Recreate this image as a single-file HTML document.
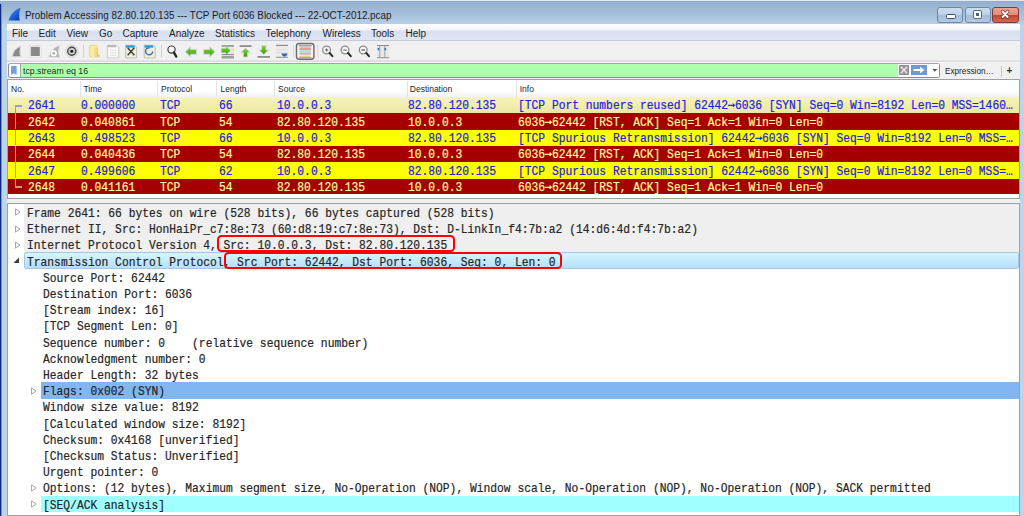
<!DOCTYPE html>
<html><head><meta charset="utf-8">
<style>
html,body{margin:0;padding:0}
body{width:1024px;height:516px;overflow:hidden;position:relative;background:#bcd4ec;font-family:"Liberation Sans",sans-serif}
.a{position:absolute}
.m{font-family:"Liberation Mono",monospace;font-size:11.85px;white-space:pre;transform:scaleX(0.9535);transform-origin:0 0;-webkit-text-stroke:0.2px currentColor;transform-origin:0 0}
.s{font-family:"Liberation Sans",sans-serif;white-space:pre}
#title{left:0;top:0;width:1024px;height:24px;background:linear-gradient(#e2eaf2 0,#e2eaf2 1px,#8ca9c9 1px,#95b1d0 2px,#a3bcd8 12px,#b5cde6 23px)}
#client{left:7px;top:23.6px;width:1013px;height:493px;background:#f0f0f0}
#menubar{left:0;top:0;width:1013px;height:17px;background:linear-gradient(#ffffff 0,#f3f5fb 6px,#d9dff0 7px,#e1e6f4 16px,#c6cad8 16px,#c6cad8 17px)}
.menu{top:4px;font-size:10px;color:#1e1e1e}
.tb{top:20px}

.hd{top:60.6px;font-size:8.5px;color:#1e1e1e}
.row{left:1px;width:1011px;height:16.3px}
.row .m{top:2.4px}
.red{background:#a40000;color:#fffc9c}
.yel{background:#ffff00;color:#2222dd}
.sel{background:linear-gradient(#f6f4b8,#ebe6a2);color:#2222dd}
.dbg{width:auto;right:1px;height:16.21px}
.par{background:#efefef}
.tsel{background:linear-gradient(#d6f6fe,#b4e0fa);border:1px solid #a8c6e4;border-radius:2px;box-sizing:border-box;margin-top:-0.6px;height:17.2px!important}
.flags{background:#82b6f0}
.seqack{background:#a0ffff}
.dt{color:#262626}
.ar{position:relative;top:-2px;-webkit-text-stroke:0.5px currentColor}
</style></head><body>
<div id="title" class="a"></div>
<div class="a" style="left:0;top:4px;width:1px;height:512px;background:#0e2c80"></div>
<div class="a" style="left:1px;top:4px;width:1px;height:512px;background:#7c96b8"></div>
<!-- title icon -->
<svg class="a" style="left:8px;top:7.4px" width="14" height="14" viewBox="0 0 14 14">
<defs><linearGradient id="fin" x1="0" y1="0" x2="1" y2="1"><stop offset="0" stop-color="#4aa0f8"/><stop offset="0.6" stop-color="#1a5ad8"/><stop offset="1" stop-color="#0a32a0"/></linearGradient></defs>
<path d="M0.6 13.4 C2.2 7.5 6 3 12.6 0.8 C11 4.8 10.6 9.2 11.8 13.4 Z" fill="url(#fin)"/>
</svg>
<div class="a s" style="left:25px;top:9.5px;font-size:10px;color:#1a1a2a;transform:scaleX(0.985);transform-origin:0 0">Problem Accessing 82.80.120.135 --- TCP Port 6036 Blocked --- 22-OCT-2012.pcap</div>
<!-- caption buttons -->
<div class="a" style="left:937px;top:6.5px;width:24px;height:14px;border:1px solid #6f87a6;border-radius:3px;background:linear-gradient(#cadcf0 0,#bcd1ea 50%,#a3bcd9 50%,#b2c9e3 100%)"></div>
<div class="a" style="left:946px;top:14px;width:8px;height:3px;border:1px solid #3a4a60;border-radius:1.5px;background:#fff"></div>
<div class="a" style="left:964.5px;top:6.5px;width:24px;height:14px;border:1px solid #6f87a6;border-radius:3px;background:linear-gradient(#cadcf0 0,#bcd1ea 50%,#a3bcd9 50%,#b2c9e3 100%)"></div>
<div class="a" style="left:973.8px;top:11px;width:3.6px;height:2.8px;border:2px solid #fff;border-radius:1px;box-shadow:0 0 0 1px #5a6a80;background:#4a6080"></div>
<div class="a" style="left:992px;top:6.5px;width:25px;height:14px;border:1px solid #7a3a40;border-radius:3px;background:linear-gradient(#eca294 0,#e08a78 50%,#c4432c 50%,#d46a50 100%)"></div>
<svg class="a" style="left:998px;top:8px" width="14" height="12" viewBox="0 0 14 12"><path d="M4.6 3.6 L9.6 9 M9.6 3.6 L4.6 9" stroke="#6a3030" stroke-width="3.4" stroke-linecap="round"/><path d="M4.6 3.6 L9.6 9 M9.6 3.6 L4.6 9" stroke="#fff" stroke-width="2" stroke-linecap="round"/></svg>

<div id="client" class="a">
 <div id="menubar" class="a"></div>
 <div class="a s menu" style="left:5px">File</div>
 <div class="a s menu" style="left:31.5px">Edit</div>
 <div class="a s menu" style="left:59.5px">View</div>
 <div class="a s menu" style="left:92px">Go</div>
 <div class="a s menu" style="left:115.5px">Capture</div>
 <div class="a s menu" style="left:162px">Analyze</div>
 <div class="a s menu" style="left:208px">Statistics</div>
 <div class="a s menu" style="left:258.5px">Telephony</div>
 <div class="a s menu" style="left:315.5px">Wireless</div>
 <div class="a s menu" style="left:364px">Tools</div>
 <div class="a s menu" style="left:398.5px">Help</div>

 <!-- toolbar (client coords: x-7, y-23.6) -->
 <div class="a" style="left:0;top:36.6px;width:1013px;height:1.6px;background:linear-gradient(#e6e6e6,#d8d8d8)"></div>
 <div class="a" style="left:0;top:38.2px;width:1013px;height:1.2px;background:#f8f6f8"></div>
 <!-- filter box -->
 <div class="a" style="left:1px;top:39.7px;width:930px;height:12.4px;border:1.2px solid #8c8c8c;border-top-color:#a8a0a8;border-radius:3px;background:#afffaf"></div>
 <div class="a" style="left:2.2px;top:40.9px;width:10.8px;height:12.4px;background:#fff;border-right:0.8px solid #a0a8a0;border-radius:2px 0 0 2px"></div>
 <svg class="a" style="left:4.4px;top:42.2px" width="6" height="10" viewBox="0 0 6 10"><path d="M0 0 H5.6 V9.1 L2.8 7.3 L0 9.1 Z" fill="#72a0d8"/></svg>
 <div class="a s" style="left:15.8px;top:42.3px;font-size:9px;color:#1e2a1e;transform:scaleX(0.97);transform-origin:0 0">tcp.stream eq 16</div>
 <div class="a" style="left:891px;top:40.6px;width:41px;height:12.6px;background:#fff"></div>
 <svg class="a" style="left:891.8px;top:41.9px" width="10" height="10" viewBox="0 0 10 10"><rect x="0" y="0" width="10" height="10" rx="1" fill="#8c8c8c"/><rect x="1" y="1" width="8" height="8" fill="#9c9c9c"/><path d="M1.8 1.8 L8.2 8.2 M8.2 1.8 L1.8 8.2" stroke="#e8e8e8" stroke-width="1.3"/></svg>
 <svg class="a" style="left:903.7px;top:41.9px" width="16" height="10" viewBox="0 0 16 10"><rect x="0" y="0" width="16" height="10" fill="#6c9ad4"/><path d="M2.5 4 H9 V1.8 L13.5 5 L9 8.2 V6 H2.5 Z" fill="#fff"/></svg>
 <svg class="a" style="left:924.8px;top:45.4px" width="6" height="4" viewBox="0 0 6 4"><path d="M0.4 0 H5.2 L2.8 2.8 Z" fill="#505050"/></svg>
 <div class="a s" style="left:937.5px;top:42.8px;font-size:9px;color:#1e1e1e;transform:scaleX(0.91);transform-origin:0 0">Expression…</div>
 <div class="a" style="left:994px;top:42px;width:1px;height:11px;background:#c8c8c8"></div>
 <div class="a s" style="left:999.6px;top:41.6px;font-size:10px;font-weight:bold;color:#303030">+</div>

 <!-- packet list -->
 <div class="a" style="left:0;top:55.4px;width:1013px;height:1px;background:#a0a0a0"></div>
 <div class="a" style="left:0;top:55.4px;width:1px;height:120px;background:#a0a0a0"></div>
 <div class="a" style="left:1012px;top:55.4px;width:1px;height:120px;background:#a0a0a0"></div>
 <div class="a" style="left:1px;top:56.4px;width:1011px;height:17.1px;background:linear-gradient(#ffffff,#ffffff 60%,#f2f2f2)"></div>
 <div class="a" style="left:72.5px;top:57px;width:1px;height:16px;background:#e2e2e2"></div>
 <div class="a" style="left:150.2px;top:57px;width:1px;height:16px;background:#e2e2e2"></div>
 <div class="a" style="left:209.2px;top:57px;width:1px;height:16px;background:#e2e2e2"></div>
 <div class="a" style="left:266.6px;top:57px;width:1px;height:16px;background:#e2e2e2"></div>
 <div class="a" style="left:399.6px;top:57px;width:1px;height:16px;background:#e2e2e2"></div>
 <div class="a" style="left:509px;top:57px;width:1px;height:16px;background:#e2e2e2"></div>
 <div class="a s hd" style="left:4px">No.</div>
 <div class="a s hd" style="left:76.4px">Time</div>
 <div class="a s hd" style="left:154px">Protocol</div>
 <div class="a s hd" style="left:213.5px">Length</div>
 <div class="a s hd" style="left:271px">Source</div>
 <div class="a s hd" style="left:402.8px">Destination</div>
 <div class="a s hd" style="left:512.7px">Info</div>
 <div class="a row sel" style="top:73.50px"><span class="a m" style="left:20px">2641</span><span class="a m" style="left:72.5px">0.000000</span><span class="a m" style="left:151.5px">TCP</span><span class="a m" style="left:210.5px">66</span><span class="a m" style="left:268.5px">10.0.0.3</span><span class="a m" style="left:400px">82.80.120.135</span><span class="a m" style="left:509.5px">[TCP Port numbers reused] 62442<span class="ar">→</span>6036 [SYN] Seq=0 Win=8192 Len=0 MSS=1460…</span></div>
 <div class="a row red" style="top:89.80px"><span class="a m" style="left:20px">2642</span><span class="a m" style="left:72.5px">0.040861</span><span class="a m" style="left:151.5px">TCP</span><span class="a m" style="left:210.5px">54</span><span class="a m" style="left:268.5px">82.80.120.135</span><span class="a m" style="left:400px">10.0.0.3</span><span class="a m" style="left:509.5px">6036<span class="ar">→</span>62442 [RST, ACK] Seq=1 Ack=1 Win=0 Len=0</span></div>
 <div class="a row yel" style="top:106.10px"><span class="a m" style="left:20px">2643</span><span class="a m" style="left:72.5px">0.498523</span><span class="a m" style="left:151.5px">TCP</span><span class="a m" style="left:210.5px">66</span><span class="a m" style="left:268.5px">10.0.0.3</span><span class="a m" style="left:400px">82.80.120.135</span><span class="a m" style="left:509.5px">[TCP Spurious Retransmission] 62442<span class="ar">→</span>6036 [SYN] Seq=0 Win=8192 Len=0 MSS=…</span></div>
 <div class="a row red" style="top:122.40px"><span class="a m" style="left:20px">2644</span><span class="a m" style="left:72.5px">0.040436</span><span class="a m" style="left:151.5px">TCP</span><span class="a m" style="left:210.5px">54</span><span class="a m" style="left:268.5px">82.80.120.135</span><span class="a m" style="left:400px">10.0.0.3</span><span class="a m" style="left:509.5px">6036<span class="ar">→</span>62442 [RST, ACK] Seq=1 Ack=1 Win=0 Len=0</span></div>
 <div class="a row yel" style="top:138.70px"><span class="a m" style="left:20px">2647</span><span class="a m" style="left:72.5px">0.499606</span><span class="a m" style="left:151.5px">TCP</span><span class="a m" style="left:210.5px">62</span><span class="a m" style="left:268.5px">10.0.0.3</span><span class="a m" style="left:400px">82.80.120.135</span><span class="a m" style="left:509.5px">[TCP Spurious Retransmission] 62442<span class="ar">→</span>6036 [SYN] Seq=0 Win=8192 Len=0 MSS=…</span></div>
 <div class="a row red" style="top:155.00px"><span class="a m" style="left:20px">2648</span><span class="a m" style="left:72.5px">0.041161</span><span class="a m" style="left:151.5px">TCP</span><span class="a m" style="left:210.5px">54</span><span class="a m" style="left:268.5px">82.80.120.135</span><span class="a m" style="left:400px">10.0.0.3</span><span class="a m" style="left:509.5px">6036<span class="ar">→</span>62442 [RST, ACK] Seq=1 Ack=1 Win=0 Len=0</span></div>

 <div class="a" style="left:7.5px;top:81.60px;width:1.6px;height:7.60px;background:rgba(34,34,221,0.4)"></div>
 <div class="a" style="left:9.1px;top:81.60px;width:5.90px;height:1.5px;background:rgba(34,34,221,0.4)"></div>
 <div class="a" style="left:7.5px;top:89.20px;width:1.6px;height:16.3px;background:rgba(255,252,156,0.6)"></div>
 <div class="a" style="left:7.5px;top:105.50px;width:1.6px;height:16.3px;background:rgba(34,34,221,0.4)"></div>
 <div class="a" style="left:7.5px;top:121.80px;width:1.6px;height:16.3px;background:rgba(255,252,156,0.6)"></div>
 <div class="a" style="left:7.5px;top:138.10px;width:1.6px;height:16.3px;background:rgba(34,34,221,0.4)"></div>
 <div class="a" style="left:7.5px;top:154.40px;width:1.6px;height:9.60px;background:rgba(255,252,156,0.6)"></div>
 <div class="a" style="left:9.1px;top:162.40px;width:6.20px;height:1.6px;background:rgba(255,252,156,0.6)"></div>
 <div class="a" style="left:1px;top:170.8px;width:1011px;height:3.8px;background:#fff"></div>
 <div class="a" style="left:0;top:174.6px;width:1013px;height:1px;background:#a0a0a0"></div>
 <div class="a" style="left:0;top:179.4px;width:1013px;height:1px;background:#a0a0a0"></div>
 <div class="a" style="left:0;top:180.4px;width:1px;height:313px;background:#a0a0a0"></div>
 <div class="a" style="left:1012px;top:180.4px;width:1px;height:313px;background:#a0a0a0"></div>
 <div class="a" style="left:1px;top:180.4px;width:1011px;height:310.6px;background:#fff"></div>
 <div class="a" style="left:0;top:491px;width:1013px;height:1px;background:#a0a0a0"></div>
 <div class="a dbg par" style="top:180.40px;left:17.3px"></div>
 <svg class="a" style="left:7.8px;top:184.90px" width="6" height="8" viewBox="0 0 6 8"><path d="M0.5 0.8 L5 4 L0.5 7.2 Z" fill="#fff" stroke="#a8a8a8" stroke-width="1"/></svg>
 <div class="a m dt" style="left:20.2px;top:183.30px">Frame 2641: 66 bytes on wire (528 bits), 66 bytes captured (528 bits)</div>
 <div class="a dbg par" style="top:196.61px;left:17.3px"></div>
 <svg class="a" style="left:7.8px;top:201.11px" width="6" height="8" viewBox="0 0 6 8"><path d="M0.5 0.8 L5 4 L0.5 7.2 Z" fill="#fff" stroke="#a8a8a8" stroke-width="1"/></svg>
 <div class="a m dt" style="left:20.2px;top:199.51px">Ethernet II, Src: HonHaiPr_c7:8e:73 (60:d8:19:c7:8e:73), Dst: D-LinkIn_f4:7b:a2 (14:d6:4d:f4:7b:a2)</div>
 <div class="a dbg par" style="top:212.82px;left:17.3px"></div>
 <svg class="a" style="left:7.8px;top:217.32px" width="6" height="8" viewBox="0 0 6 8"><path d="M0.5 0.8 L5 4 L0.5 7.2 Z" fill="#fff" stroke="#a8a8a8" stroke-width="1"/></svg>
 <div class="a m dt" style="left:20.2px;top:215.72px">Internet Protocol Version 4, Src: 10.0.0.3, Dst: 82.80.120.135</div>
 <div class="a dbg tsel" style="top:229.03px;left:17.3px"></div>
 <svg class="a" style="left:6.3px;top:233.53px" width="7" height="7" viewBox="0 0 7 7"><path d="M6 0.5 V6 H0.5 Z" fill="#3c3c3c"/></svg>
 <div class="a m dt" style="left:20.2px;top:231.93px">Transmission Control Protocol, Src Port: 62442, Dst Port: 6036, Seq: 0, Len: 0</div>
 <div class="a m dt" style="left:36.2px;top:248.14px">Source Port: 62442</div>
 <div class="a m dt" style="left:36.2px;top:264.35px">Destination Port: 6036</div>
 <div class="a m dt" style="left:36.2px;top:280.56px">[Stream index: 16]</div>
 <div class="a m dt" style="left:36.2px;top:296.77px">[TCP Segment Len: 0]</div>
 <div class="a m dt" style="left:36.2px;top:312.98px">Sequence number: 0    (relative sequence number)</div>
 <div class="a m dt" style="left:36.2px;top:329.19px">Acknowledgment number: 0</div>
 <div class="a m dt" style="left:36.2px;top:345.40px">Header Length: 32 bytes</div>
 <div class="a dbg flags" style="top:358.71px;left:34.3px"></div>
 <svg class="a" style="left:23.8px;top:363.21px" width="6" height="8" viewBox="0 0 6 8"><path d="M0.5 0.8 L5 4 L0.5 7.2 Z" fill="#fff" stroke="#a8a8a8" stroke-width="1"/></svg>
 <div class="a m dt" style="left:36.2px;top:361.61px">Flags: 0x002 (SYN)</div>
 <div class="a m dt" style="left:36.2px;top:377.82px">Window size value: 8192</div>
 <div class="a m dt" style="left:36.2px;top:394.03px">[Calculated window size: 8192]</div>
 <div class="a m dt" style="left:36.2px;top:410.24px">Checksum: 0x4168 [unverified]</div>
 <div class="a m dt" style="left:36.2px;top:426.45px">[Checksum Status: Unverified]</div>
 <div class="a m dt" style="left:36.2px;top:442.66px">Urgent pointer: 0</div>
 <svg class="a" style="left:23.8px;top:460.47px" width="6" height="8" viewBox="0 0 6 8"><path d="M0.5 0.8 L5 4 L0.5 7.2 Z" fill="#fff" stroke="#a8a8a8" stroke-width="1"/></svg>
 <div class="a m dt" style="left:36.2px;top:458.87px">Options: (12 bytes), Maximum segment size, No-Operation (NOP), Window scale, No-Operation (NOP), No-Operation (NOP), SACK permitted</div>
 <div class="a dbg seqack" style="top:472.18px;left:34.3px"></div>
 <svg class="a" style="left:23.8px;top:476.68px" width="6" height="8" viewBox="0 0 6 8"><path d="M0.5 0.8 L5 4 L0.5 7.2 Z" fill="#fff" stroke="#a8a8a8" stroke-width="1"/></svg>
 <div class="a m dt" style="left:36.2px;top:475.08px">[SEQ/ACK analysis]</div>

 <div class="a" style="left:210px;top:211.2px;width:234.3px;height:13.1px;border:2.5px solid #f00;border-radius:4.5px"></div>
 <div class="a" style="left:217.3px;top:228.6px;width:333.7px;height:12.4px;border:2.5px solid #f00;border-radius:4.5px"></div>
</div>
<svg class="a" style="left:0;top:40px" width="400" height="22" viewBox="0 40 400 22">
<defs>
<linearGradient id="grn" x1="0" y1="0" x2="0" y2="1"><stop offset="0" stop-color="#7ad83a"/><stop offset="1" stop-color="#3c9c08"/></linearGradient>
<linearGradient id="fold" x1="0" y1="0" x2="1" y2="0"><stop offset="0" stop-color="#fff3a8"/><stop offset="1" stop-color="#e8c860"/></linearGradient>
</defs>
<!-- 1 fin -->
<path d="M12.1 56.7 C13 51.5 16 47.4 21 46 C19.9 49.6 19.7 53.4 20.9 56.7 Z" fill="#8a8a8a" stroke="#dcdcdc" stroke-width="1.1"/>
<!-- 2 stop -->
<rect x="29.4" y="45.4" width="11.8" height="12" fill="#f3f3f3" stroke="#e0e0e0" stroke-width="0.8"/>
<rect x="30.8" y="46.8" width="9" height="9.2" fill="#8a8a8a"/>
<!-- 3 restart -->
<path d="M48.7 57.4 C50 51.5 54 47 59.8 45.3 C58.5 49 58.3 53.5 59.8 57.4 Z" fill="#b2b2b2" stroke="#e2e2e2" stroke-width="1"/>
<circle cx="53.8" cy="53.3" r="2.3" fill="none" stroke="#fff" stroke-width="1.6"/>
<circle cx="53.2" cy="51" r="1" fill="#fff"/>
<!-- 4 gear -->
<circle cx="71.8" cy="51.25" r="6.3" fill="#e6e6e6" stroke="#d2d2d2" stroke-width="0.8"/>
<circle cx="71.8" cy="51.25" r="4.7" fill="#3c3c3c"/>
<circle cx="71.8" cy="51.25" r="3.3" fill="#d0d0d0" stroke="#b8b8b8" stroke-width="0.5" stroke-dasharray="1 1"/>
<circle cx="71.8" cy="51.25" r="1.6" fill="#262626"/>
<rect x="83" y="45" width="1" height="12.5" fill="#d2d2d2"/>
<!-- 5 folder -->
<path d="M89.3 45.3 H96.5 L97.6 47 V56.5 H89.3 Z" fill="#f6e9a0" stroke="#e2d080" stroke-width="0.6"/>
<path d="M91.8 47.2 L97.8 48.2 L98.6 57.2 L92.3 57.6 Z" fill="url(#fold)"/>
<path d="M98.6 55 L100.4 55.8 L98.6 57.2 Z" fill="#b8b8b8"/>
<!-- 6 doc -->
<path d="M107.3 45.2 H116.5 L118.8 47.5 V58 H107.3 Z" fill="#f8f8f8" stroke="#c4c4c4" stroke-width="0.9"/>
<rect x="107.6" y="45.4" width="8.5" height="1.8" fill="#b4b4b4"/>
<path d="M110.3 50.3 H116 M110.3 52.8 H116 M110.3 55.3 H116" stroke="#cacaca" stroke-width="0.8" stroke-dasharray="1 0.6"/>
<!-- 7 close -->
<path d="M125.6 45.2 H134.6 L136.6 47.2 V58 H125.6 Z" fill="#eeeedc" stroke="#bcbcac" stroke-width="0.9"/>
<rect x="126" y="45.4" width="8.6" height="2.2" fill="#2a96e0"/>
<path d="M127.6 47.8 L134.4 55.2 M134.4 47.8 L127.6 55.2" stroke="#3c3c3c" stroke-width="1.4"/>
<!-- 8 reload -->
<path d="M144.2 45.2 H153.2 L155.2 47.2 V58 H144.2 Z" fill="#eeeedc" stroke="#bcbcac" stroke-width="0.9"/>
<rect x="144.6" y="45.4" width="8.6" height="2.2" fill="#2a96e0"/>
<path d="M152.6 51.4 A3.5 3.5 0 1 1 149.6 47.9" fill="none" stroke="#3a66b4" stroke-width="1.3"/>
<rect x="161" y="45" width="1" height="12.5" fill="#d2d2d2"/>
<!-- 9 find -->
<circle cx="171.5" cy="49.6" r="3.6" fill="#f8f8f8" stroke="#3c3c3c" stroke-width="1.2"/>
<path d="M173.9 52.4 L176.3 56.6" stroke="#1e1e1e" stroke-width="2.2" stroke-linecap="round"/>
<!-- 10 back -->
<path d="M185.3 51.8 L190.6 46.8 V49.4 H196.6 V54.2 H190.6 V56.8 Z" fill="url(#grn)" stroke="#d4d4d4" stroke-width="1"/>
<!-- 11 fwd -->
<path d="M215 51.8 L209.7 46.8 V49.4 H203.7 V54.2 H209.7 V56.8 Z" fill="url(#grn)" stroke="#d4d4d4" stroke-width="1"/>
<!-- 12 goto -->
<rect x="221.6" y="45.2" width="12.4" height="1.5" fill="#8e8e8e"/>
<rect x="221.6" y="47" width="12.4" height="7" fill="#e8e8e8"/>
<rect x="221.6" y="54" width="12.4" height="1.2" fill="#8e8e8e"/>
<rect x="221.6" y="56" width="12.4" height="2.6" fill="#a0a0a0"/>
<rect x="231" y="49.1" width="3" height="1.4" fill="#f0e040"/>
<path d="M230.3 50.5 L226.3 46.6 V48.6 H221.4 V52.4 H226.3 V54.4 Z" fill="url(#grn)"/>
<!-- 13 first -->
<rect x="239.6" y="45.2" width="12" height="1.8" fill="#8e8e8e"/>
<path d="M245.5 48 L250 52.6 H247.6 V57 H243.4 V52.6 H241 Z" fill="url(#grn)" stroke="#d4d4d4" stroke-width="0.8"/>
<!-- 14 last -->
<rect x="257.6" y="56" width="12.4" height="1.8" fill="#8e8e8e"/>
<path d="M263.8 54.6 L268.6 50 H266 V45.6 H261.6 V50 H259 Z" fill="url(#grn)" stroke="#d4d4d4" stroke-width="0.8"/>
<!-- 15 autoscroll -->
<rect x="276" y="44.8" width="12" height="13" fill="#ebebeb"/>
<rect x="276" y="44.8" width="12" height="1.2" fill="#8e8e8e"/>
<rect x="276" y="56.8" width="12" height="1" fill="#8e8e8e"/>
<path d="M276 49.6 H288 M276 52.8 H288" stroke="#d8d8d8" stroke-width="0.6"/>
<path d="M281.4 53.6 H287.6 L286.5 55.8 L284.5 56.8 L282.5 55.8 Z" fill="#3466b4"/>
<rect x="293" y="45" width="1" height="12.5" fill="#d8d8d8"/>
<!-- 16 colorize pressed -->
<rect x="296.5" y="43.6" width="17.4" height="15.6" rx="2.6" fill="#f8f8f8" stroke="#6e6e6e" stroke-width="1.5"/>
<rect x="298.8" y="44.6" width="12.8" height="2" fill="#a4a8a8"/>
<rect x="299.4" y="47.4" width="11.6" height="1.5" fill="#f49090"/>
<rect x="299.4" y="49" width="11.6" height="1.4" fill="#90b4e4"/>
<rect x="299.4" y="50.6" width="11.6" height="1.7" fill="#b6e88e"/>
<rect x="299.4" y="52.5" width="11.6" height="1.6" fill="#a8bce4"/>
<rect x="299.4" y="54.1" width="11.6" height="0.6" fill="#d0a0c0"/>
<rect x="299.4" y="55.6" width="11.6" height="1.5" fill="#e8d080"/>
<rect x="298.8" y="57.2" width="12.8" height="1.4" fill="#9c9c9c"/>
<rect x="317.2" y="45" width="1" height="12.5" fill="#d8d8d8"/>
<!-- 17-19 zoom -->
<circle cx="326.6" cy="50" r="3.9" fill="#f6f6f6" stroke="#8a8a8a" stroke-width="1.3"/>
<path d="M325 50 H328.2 M326.6 48.4 V51.6" stroke="#6a6a6a" stroke-width="1.2"/>
<path d="M329.6 53 L332.4 56.2" stroke="#2a2a2a" stroke-width="2" stroke-linecap="round"/>
<circle cx="345" cy="50" r="3.9" fill="#f6f6f6" stroke="#8a8a8a" stroke-width="1.3"/>
<path d="M343.2 50 H346.8" stroke="#8a8a8a" stroke-width="1.4"/>
<path d="M348 53 L350.8 56.2" stroke="#2a2a2a" stroke-width="2" stroke-linecap="round"/>
<circle cx="363.2" cy="50" r="3.9" fill="#f6f6f6" stroke="#8a8a8a" stroke-width="1.3"/>
<path d="M361.4 50 H365" stroke="#6a6a6a" stroke-width="1.4"/>
<path d="M366.2 53 L369 56.2" stroke="#2a2a2a" stroke-width="2" stroke-linecap="round"/>
<!-- 20 resize -->
<rect x="377" y="45" width="12.2" height="13" fill="#e8e8e8"/>
<rect x="377" y="45" width="12.2" height="1" fill="#8e8e8e"/>
<rect x="377" y="57.2" width="12.2" height="1" fill="#8e8e8e"/>
<rect x="379.3" y="46" width="0.9" height="11.2" fill="#9a9a9a"/>
<rect x="384.4" y="46" width="0.9" height="11.2" fill="#9a9a9a"/>
<ellipse cx="378.5" cy="49.1" rx="0.9" ry="1.3" fill="#3a6ac0"/>
<ellipse cx="385.3" cy="49.1" rx="0.9" ry="1.3" fill="#3a6ac0"/>
</svg>
</body></html>
